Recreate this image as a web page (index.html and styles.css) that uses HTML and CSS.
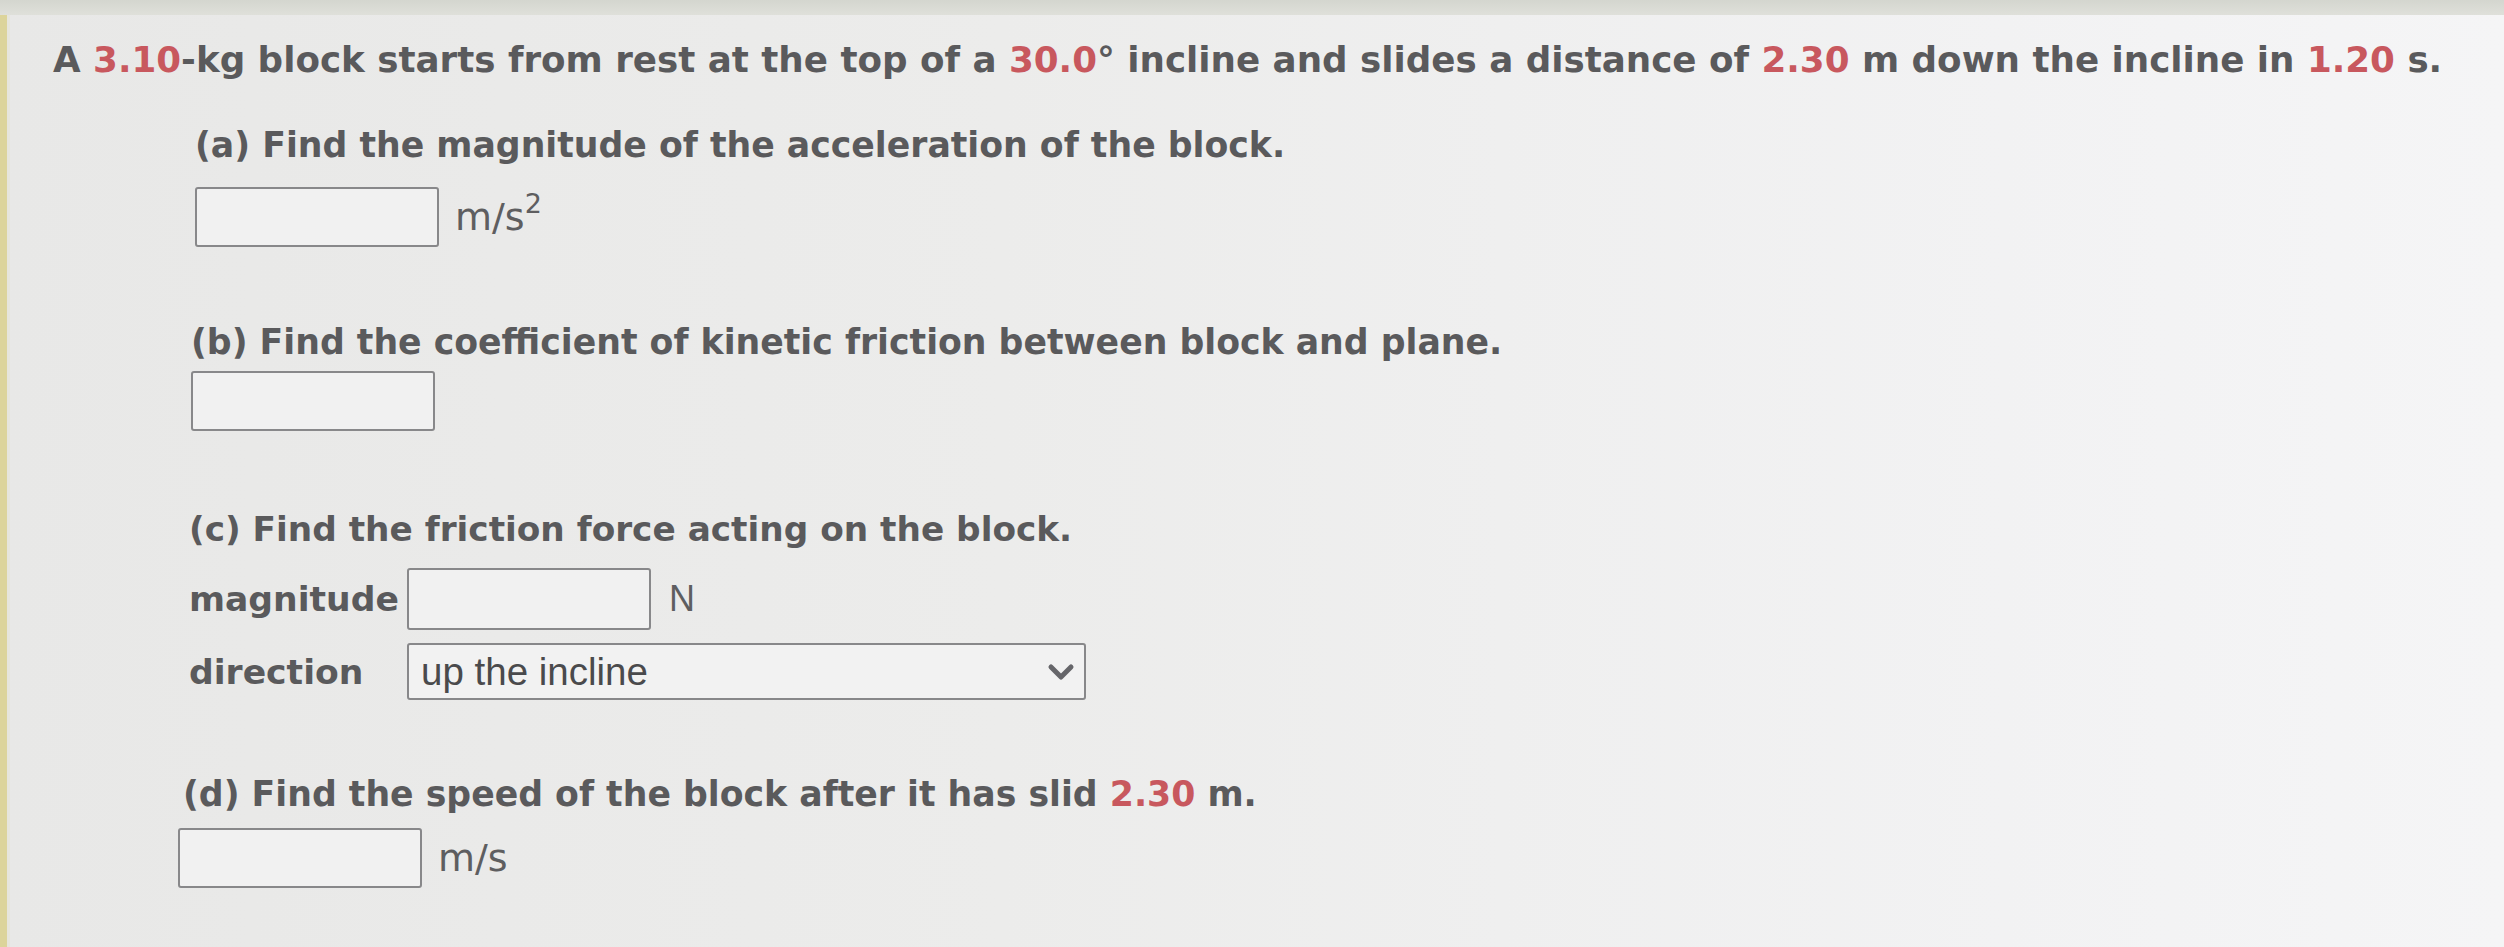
FILE: index.html
```html
<!DOCTYPE html>
<html>
<head>
<meta charset="utf-8">
<link rel="stylesheet" href="styles.css">
</head>
<body>
<div class="topbar"></div>
<div class="frame">
  <div class="stripe"></div>
  <div class="content">
    <p class="stem">A <span class="num">3.10</span>-kg block starts from rest at the top of a <span class="num">30.0</span>&deg; incline and slides a distance of <span class="num">2.30</span> m down the incline in <span class="num">1.20</span> s.</p>

    <div class="part part-a">
      <p class="q">(a) Find the magnitude of the acceleration of the block.</p>
      <div class="answer answer-a">
        <span class="box"></span>
        <span class="unit">m/s<sup>2</sup></span>
      </div>
    </div>

    <div class="part part-b">
      <p class="q">(b) Find the coefficient of kinetic friction between block and plane.</p>
      <div class="answer answer-b">
        <span class="box"></span>
      </div>
    </div>

    <div class="part part-c">
      <p class="q q-c">(c) Find the friction force acting on the block.</p>
      <div class="row row-mag">
        <span class="label">magnitude</span>
        <span class="box box-mag"></span>
        <span class="unit unit-n">N</span>
      </div>
      <div class="row row-dir">
        <span class="label">direction</span>
        <div class="select">
          <span class="select-text">up the incline</span>
          <svg class="chev" width="30" height="20" viewBox="0 0 30 20"><path d="M5 5 L15 15 L25 5" fill="none" stroke="#66666a" stroke-width="5" stroke-linecap="round" stroke-linejoin="round"/></svg>
        </div>
      </div>
    </div>

    <div class="part part-d">
      <p class="q">(d) Find the speed of the block after it has slid <span class="num">2.30</span> m.</p>
      <div class="answer answer-d">
        <span class="box"></span>
        <span class="unit">m/s</span>
      </div>
    </div>
  </div>
</div>
</body>
</html>
```

FILE: styles.css
```css
html, body {
  margin: 0;
  padding: 0;
}
body {
  width: 2504px;
  height: 947px;
  overflow: hidden;
  background: linear-gradient(to right, #e8e8e7 0%, #ececeb 40%, #f2f2f3 80%, #f5f5f6 100%);
  font-family: "DejaVu Sans", Verdana, sans-serif;
  color: #58585a;
}
.topbar {
  height: 15px;
  background: linear-gradient(to bottom, #d4d6cf, #dfe0da);
}
.frame {
  display: flex;
  height: 932px;
}
.stripe {
  width: 7px;
  background: #dcd49a;
  border-right: 3px solid #e6e5dc;
  flex: none;
}
.content {
  flex: 1;
  padding-left: 43px;
  padding-top: 23px;
}
p {
  margin: 0;
}
.stem {
  font-size: 35.7px;
  line-height: 44px;
  font-weight: bold;
  white-space: nowrap;
  color: #5a5a5c;
}
.q {
  font-size: 34.7px;
  line-height: 44px;
  font-weight: bold;
  white-space: nowrap;
  color: #5a5a5c;
}
.q-c {
  font-size: 34.3px;
}
.num {
  color: #c8585e;
}
.part-a { margin-top: 41px; margin-left: 142px; }
.part-b { margin-top: 73px; margin-left: 138px; }
.part-c { margin-top: 76px; margin-left: 136px; }
.part-d { margin-top: 72px; margin-left: 130px; }

.answer {
  display: flex;
  align-items: center;
}
.answer-a { margin-top: 20px; }
.answer-b { margin-top: 7px; }
.answer-d { margin-top: 12px; margin-left: -5px; }

.box {
  display: inline-block;
  width: 240px;
  height: 56px;
  border: 2px solid #88888a;
  border-radius: 3px;
  background: #f1f1f1;
  flex: none;
}
.unit {
  font-size: 38px;
  color: #5e5e60;
  margin-left: 16px;
  line-height: 44px;
}
.unit sup {
  font-size: 27px;
  line-height: 0;
  position: relative;
  top: -3px;
}
.row {
  display: flex;
  align-items: center;
}
.row-mag { margin-top: 17px; }
.row-dir { margin-top: 13px; }
.label {
  font-size: 34.6px;
  font-weight: bold;
  color: #5a5a5c;
  width: 218px;
  flex: none;
  white-space: nowrap;
}
.box-mag {
  width: 240px;
  height: 58px;
}
.unit-n {
  font-family: "Liberation Sans", Arial, sans-serif;
  font-size: 36px;
  margin-left: 18px;
}
.select {
  width: 679px;
  height: 57px;
  border: 2px solid #88888a;
  border-radius: 3px;
  background: #f2f2f2;
  display: flex;
  align-items: center;
  justify-content: space-between;
  padding: 0 8px 0 12px;
  box-sizing: border-box;
  flex: none;
}
.select-text {
  font-family: "Liberation Sans", Arial, sans-serif;
  font-size: 38.5px;
  color: #4a4a4c;
}
.chev {
  display: block;
}
```
